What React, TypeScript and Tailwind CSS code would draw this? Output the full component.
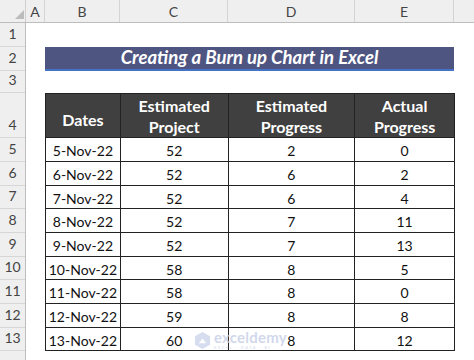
import React from 'react';

const cols = [
  { name: 'A', w: 19 },
  { name: 'B', w: 75 },
  { name: 'C', w: 108 },
  { name: 'D', w: 127 },
  { name: 'E', w: 99 },
  { name: 'F', w: 40 },
];

const rowHeights = [24, 24, 22, 45, 24, 24, 23, 24, 24, 23, 24, 24, 23, 24];

const data = [
  ['5-Nov-22', '52', '2', '0'],
  ['6-Nov-22', '52', '6', '2'],
  ['7-Nov-22', '52', '6', '4'],
  ['8-Nov-22', '52', '7', '11'],
  ['9-Nov-22', '52', '7', '13'],
  ['10-Nov-22', '58', '8', '5'],
  ['11-Nov-22', '58', '8', '0'],
  ['12-Nov-22', '59', '8', '8'],
  ['13-Nov-22', '60', '8', '12'],
];

const tableCols = [75, 108, 127, 99];

function Watermark() {
  return (
    <div className="absolute left-[194px] top-[330px] flex items-center gap-[3px] opacity-75">
      <svg width="17" height="19" viewBox="0 0 18 20">
        <path d="M9 1 L17 5.5 L17 14.5 L9 19 L1 14.5 L1 5.5 Z" fill="#c9d2ea" />
        <path d="M5 13 L9 8 L13 13 Z" fill="#ffffff" />
      </svg>
      <div className="flex flex-col items-start leading-none">
        <span className="text-[15px] font-bold text-[#c3cce6] tracking-[0.2px]">exceldemy</span>
        <span className="text-[4px] text-[#c3cce6] tracking-[1.5px] mt-[1px]">EXCEL · DATA · BI</span>
      </div>
    </div>
  );
}

export default function App() {
  return (
    <div
      className="relative w-[474px] h-[360px] overflow-hidden bg-white"
      style={{ fontFamily: 'Lato, "Open Sans", sans-serif' }}
    >
      {/* column headings */}
      <div className="flex h-[23px] bg-[#efefef] border-b border-[#bdbdbd]">
        <div className="relative w-[26px] shrink-0 border-r border-[#cfcfcf]">
          <svg className="absolute left-[15px] top-[10px]" width="9" height="9" viewBox="0 0 9 9">
            <path d="M9 0 L9 9 L0 9 Z" fill="#bcbcbc" />
          </svg>
        </div>
        {cols.map((c) => (
          <div
            key={c.name}
            className="shrink-0 flex items-center justify-center border-r border-[#d4d4d4] text-[14px] text-[#444]"
            style={{ width: c.w }}
          >
            {c.name === 'F' ? '' : c.name}
          </div>
        ))}
      </div>

      <div className="flex">
        {/* row headings */}
        <div className="w-[26px] shrink-0 flex flex-col bg-[#efefef] border-r border-[#bdbdbd]">
          {rowHeights.map((h, i) => (
            <div
              key={i}
              className="flex items-end justify-center pb-[2px] border-b border-[#d6d6d6] text-[14px] text-[#444] box-border"
              style={{ height: h }}
            >
              {i < 13 ? i + 1 : ''}
            </div>
          ))}
        </div>

        {/* sheet */}
        <div className="flex flex-col pl-[19px]">
          <div className="h-[24px]" />
          <div className="h-[24px] w-[409px] bg-[#4f5581] border-b-2 border-[#4472c4] flex items-center justify-center">
            <span className="text-white text-[18.5px] font-bold italic">Creating a Burn up Chart in Excel</span>
          </div>
          <div className="h-[22px]" />

          <div className="w-[410px] border border-[#222] text-[14px] text-[#111]">
            <div className="flex h-[44px] bg-[#404040] text-white font-bold text-[16px] leading-[21px] border-b border-[#222]">
              {['Dates', 'Estimated Project', 'Estimated Progress', 'Actual Progress'].map((t, i) => (
                <div
                  key={t}
                  className={`flex items-center justify-center text-center ${i < 3 ? 'border-r border-[#222]' : ''}`}
                  style={{ width: tableCols[i] }}
                >
                  {t.includes(' ') ? (
                    <span>
                      {t.split(' ')[0]}
                      <br />
                      {t.split(' ')[1]}
                    </span>
                  ) : (
                    <span className="pt-[8px]">{t}</span>
                  )}
                </div>
              ))}
            </div>
            {data.map((r, ri) => (
              <div
                key={ri}
                className={`flex ${ri < data.length - 1 ? 'border-b border-[#222]' : ''}`}
                style={{ height: rowHeights[ri + 4] - (ri === data.length - 1 ? 1 : 0) }}
              >
                {r.map((v, i) => (
                  <div
                    key={i}
                    className={`flex items-center justify-center pt-[2px] ${i < 3 ? 'border-r border-[#222]' : ''}`}
                    style={{ width: tableCols[i] }}
                  >
                    {v}
                  </div>
                ))}
              </div>
            ))}
          </div>
        </div>
      </div>

      <Watermark />
    </div>
  );
}
